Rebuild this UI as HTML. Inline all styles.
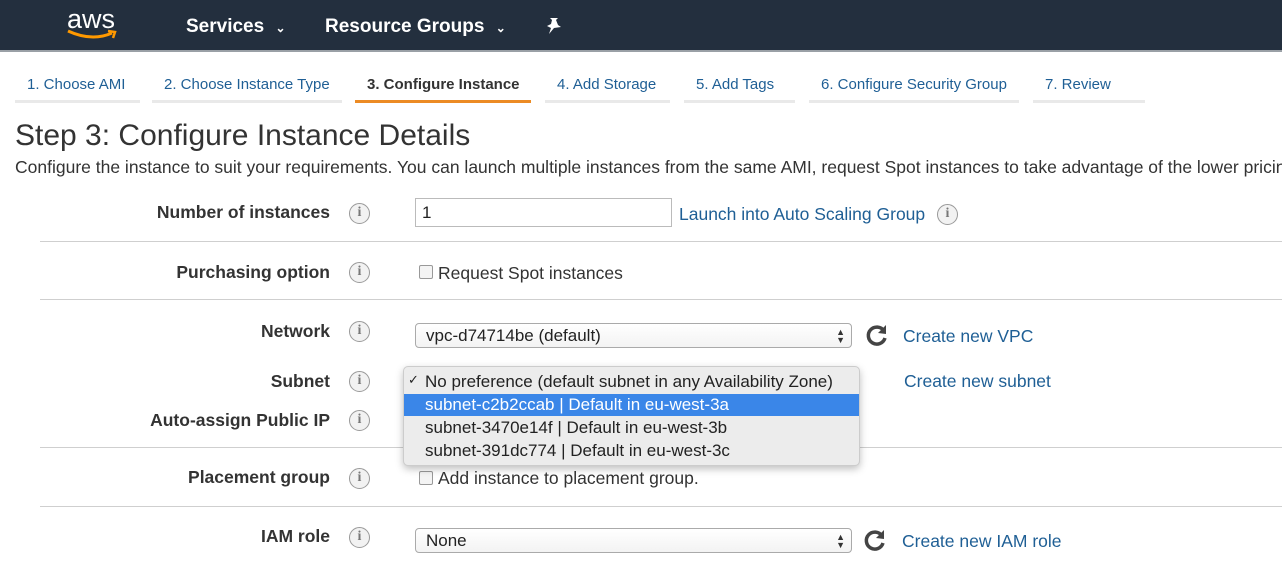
<!DOCTYPE html>
<html><head><meta charset="utf-8"><style>
body{margin:0;width:1282px;height:568px;overflow:hidden;background:#fff;font-family:"Liberation Sans",Arial,sans-serif;position:relative}
.a{position:absolute;white-space:nowrap}
.hdr{left:0;top:0;width:1282px;height:50px;background:#232f3e;border-bottom:2px solid #9aa0a6}
.nav{color:#fff;font-weight:bold;font-size:19px;top:15px}
.tab{top:76px;font-size:15px;color:#1f5f95;height:27px;border-bottom:3px solid #e9e9e9;padding:0 12px;box-sizing:border-box}
.lbl{font-weight:bold;font-size:17.5px;color:#333;text-align:right;width:330px;left:0}
.info{width:21px;height:21px;border:1.5px solid #999;border-radius:50%;box-sizing:border-box;background:#f2f2f2;color:#777;font-size:14px;text-align:center;line-height:18px;font-family:"Liberation Serif",serif;font-weight:bold;left:349px}
.sep{left:40px;width:1242px;height:1px;background:#cfcfcf}
.lnk{color:#1f5f95;font-size:17.5px}
.sel{border:1px solid #aaa;border-radius:4px;height:25px;font-size:17px;color:#222;padding-left:10px;box-sizing:border-box;line-height:23px;background:linear-gradient(#fff,#f3f3f3)}
.arr{position:absolute;right:6px;top:4px;font-size:9px;line-height:8px;color:#333}
.cb{width:12px;height:12px;border:1px solid #999;border-radius:2px;background:#f4f4f4}
.t{font-size:17.5px;color:#333}
</style></head><body>
<div class="a hdr"></div>
<div class="a" style="left:67px;top:4px;color:#fff;font-size:27px">aws</div>
<svg class="a" style="left:66px;top:28px" width="52" height="14"><path d="M2 3 Q26 14 46 5" stroke="#ff9900" stroke-width="3" fill="none"/><path d="M42 3 L49 4 L47 10" stroke="#ff9900" stroke-width="2.5" fill="none"/></svg>
<div class="a nav" style="left:186px;top:16px">Services <span style="font-size:12px;margin-left:6px">&#8964;</span></div>
<div class="a nav" style="left:325px;top:16px">Resource Groups <span style="font-size:12px;margin-left:6px">&#8964;</span></div>
<svg class="a" style="left:545px;top:16px" width="20" height="20"><path d="M5 2 L13 2 L11 4 L13 9 L16 11 L9 12 L4 18 L6 12 L2 10 L6 8 L7 4 Z" fill="#fff"/></svg>

<div class="a tab" style="left:15px;width:125px">1. Choose AMI</div>
<div class="a tab" style="left:152px;width:190px">2. Choose Instance Type</div>
<div class="a tab" style="left:355px;width:176px;color:#333;font-weight:bold;border-bottom-color:#ec8b24">3. Configure Instance</div>
<div class="a tab" style="left:545px;width:125px">4. Add Storage</div>
<div class="a tab" style="left:684px;width:111px">5. Add Tags</div>
<div class="a tab" style="left:809px;width:210px">6. Configure Security Group</div>
<div class="a tab" style="left:1033px;width:112px">7. Review</div>

<div class="a" style="left:15px;top:119px;font-size:30px;color:#333">Step 3: Configure Instance Details</div>
<div class="a" style="left:15px;top:157px;font-size:17.5px;color:#333">Configure the instance to suit your requirements. You can launch multiple instances from the same AMI, request Spot instances to take advantage of the lower pricing</div>

<div class="a lbl" style="top:202px">Number of instances</div><div class="a info" style="top:203px">i</div>
<div class="a" style="left:415px;top:198px;width:257px;height:29px;border:1px solid #bbb;box-sizing:border-box;font-size:17px;padding:4px 6px;color:#222">1</div>
<div class="a lnk" style="left:679px;top:204px">Launch into Auto Scaling Group</div><div class="a info" style="left:937px;top:204px">i</div>
<div class="a sep" style="top:241px"></div>

<div class="a lbl" style="top:262px">Purchasing option</div><div class="a info" style="top:262px">i</div>
<div class="a cb" style="left:419px;top:265px"></div><div class="a t" style="left:438px;top:263px">Request Spot instances</div>
<div class="a sep" style="top:299px"></div>

<div class="a lbl" style="top:321px">Network</div><div class="a info" style="top:321px">i</div>
<div class="a sel" style="left:415px;top:323px;width:437px">vpc-d74714be (default)<div class="arr">▲<br>▼</div></div>
<svg class="a" style="left:865px;top:323px" width="24" height="24"><path d="M19 8 A8.5 8.5 0 1 0 20 15" stroke="#444" stroke-width="3.5" fill="none"/><path d="M21 2 L21 11 L13 10 Z" fill="#444"/></svg>
<div class="a lnk" style="left:903px;top:326px">Create new VPC</div>

<div class="a lbl" style="top:371px">Subnet</div><div class="a info" style="top:371px">i</div>
<div class="a lnk" style="left:904px;top:371px">Create new subnet</div>
<div class="a lbl" style="top:410px">Auto-assign Public IP</div><div class="a info" style="top:410px">i</div>
<div class="a sep" style="top:447px"></div>

<div class="a lbl" style="top:467px">Placement group</div><div class="a info" style="top:468px">i</div>
<div class="a cb" style="left:419px;top:471px"></div><div class="a t" style="left:438px;top:468px">Add instance to placement group.</div>
<div class="a sep" style="top:506px"></div>

<div class="a lbl" style="top:526px">IAM role</div><div class="a info" style="top:527px">i</div>
<div class="a sel" style="left:415px;top:528px;width:437px">None<div class="arr">▲<br>▼</div></div>
<svg class="a" style="left:863px;top:528px" width="24" height="24"><path d="M19 8 A8.5 8.5 0 1 0 20 15" stroke="#444" stroke-width="3.5" fill="none"/><path d="M21 2 L21 11 L13 10 Z" fill="#444"/></svg>
<div class="a lnk" style="left:902px;top:531px">Create new IAM role</div>

<div class="a" style="left:403px;top:366px;width:457px;height:100px;background:#ececec;border:1px solid #ccc;border-radius:5px;box-shadow:0 3px 8px rgba(0,0,0,.25);font-size:17px;color:#222;box-sizing:border-box">
<div style="position:absolute;left:4px;top:5px;font-size:13px">✓</div>
<div style="position:absolute;left:21px;top:5px">No preference (default subnet in any Availability Zone)</div>
<div style="position:absolute;left:0;top:27px;width:455px;height:22px;background:#3a86e8"></div>
<div style="position:absolute;left:21px;top:28px;color:#fff">subnet-c2b2ccab | Default in eu-west-3a</div>
<div style="position:absolute;left:21px;top:51px">subnet-3470e14f | Default in eu-west-3b</div>
<div style="position:absolute;left:21px;top:74px">subnet-391dc774 | Default in eu-west-3c</div>
</div>
</body></html>
